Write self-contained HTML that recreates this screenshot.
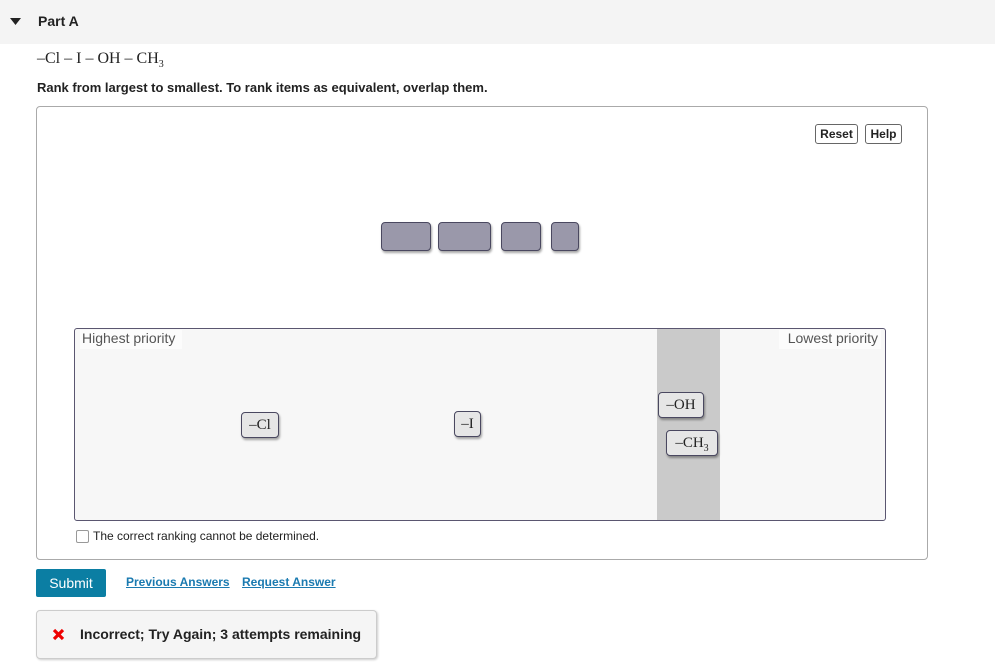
<!DOCTYPE html>
<html><head><style>
body{margin:0;width:995px;height:672px;background:#fff;font-family:"Liberation Sans",Arial,sans-serif;position:relative;overflow:hidden;color:#222}
.a{position:absolute}
.hdr{left:0;top:0;width:995px;height:44px;background:#f4f4f4}
.slot{position:absolute;top:222px;height:27px;background:#9a98aa;border:1px solid #4a4860;border-radius:4px;box-shadow:1px 2px 2px rgba(0,0,0,.35)}
.it{position:absolute;height:24px;background:#e6e6e6;border:1px solid #4a4860;border-radius:4px;box-shadow:1px 2px 2px rgba(0,0,0,.35);font-family:"Liberation Serif",serif;font-size:15px;line-height:24px;text-align:center;color:#222}
.btn{position:absolute;top:124px;height:18px;border:1px solid #666;border-radius:3px;font-size:12px;font-weight:bold;line-height:18px;text-align:center;background:#fff}
.lnk{position:absolute;top:575px;font-size:12px;font-weight:bold;color:#1a7ab0;text-decoration:underline}
</style></head><body>
<div class="a hdr"></div>
<svg class="a" style="left:10px;top:18px" width="11" height="7"><path d="M0 0H11L5.5 7Z" fill="#222"/></svg>
<div class="a" style="left:38px;top:13px;font-size:14px;font-weight:bold">Part A</div>
<div class="a" style="left:37px;top:50px;font-family:'Liberation Serif',serif;font-size:16px">–Cl – I – OH – CH<sub style="font-size:10px">3</sub></div>
<div class="a" style="left:37px;top:80px;font-size:13px;font-weight:bold">Rank from largest to smallest. To rank items as equivalent, overlap them.</div>
<div class="a" style="left:36px;top:106px;width:890px;height:452px;border:1px solid #aaa;border-radius:4px"></div>
<div class="btn" style="left:815px;width:41px">Reset</div>
<div class="btn" style="left:865px;width:35px">Help</div>
<div class="slot" style="left:381px;width:48px"></div>
<div class="slot" style="left:438px;width:51px"></div>
<div class="slot" style="left:501px;width:38px"></div>
<div class="slot" style="left:551px;width:26px"></div>
<div class="a" style="left:74px;top:328px;width:810px;height:191px;border:1px solid #5a5670;border-radius:3px;background:#f7f7f7"></div>
<div class="a" style="left:657px;top:329px;width:63px;height:191px;background:#cacaca"></div>
<div class="a" style="left:80px;top:330px;width:100px;height:19px;background:#fcfcfc;font-size:14px;color:#555;line-height:17px;padding-left:2px">Highest priority</div>
<div class="a" style="left:779px;top:330px;width:102px;height:19px;background:#fcfcfc;font-size:14px;color:#555;line-height:17px;text-align:right;padding-right:3px;box-sizing:border-box">Lowest priority</div>
<div class="it" style="left:241px;top:412px;width:36px">–Cl</div>
<div class="it" style="left:454px;top:411px;width:25px">–I</div>
<div class="it" style="left:658px;top:392px;width:44px">–OH</div>
<div class="it" style="left:666px;top:430px;width:50px">–CH<sub style="font-size:10px">3</sub></div>
<div class="a" style="left:76px;top:530px;width:11px;height:11px;border:1px solid #999;border-radius:2px;background:#fff"></div>
<div class="a" style="left:93px;top:529px;font-size:12px;color:#222">The correct ranking cannot be determined.</div>
<div class="a" style="left:36px;top:569px;width:70px;height:28px;background:#0b7ea3;border-radius:2px;color:#fff;font-size:14px;line-height:28px;text-align:center">Submit</div>
<div class="lnk" style="left:126px">Previous Answers</div>
<div class="lnk" style="left:242px">Request Answer</div>
<div class="a" style="left:36px;top:610px;width:339px;height:47px;background:#f5f5f5;border:1px solid #ccc;border-radius:4px;box-shadow:1px 1px 2px rgba(0,0,0,.2)"></div>
<svg class="a" style="left:52px;top:628px" width="13" height="13"><path d="M2 2L11 11M11 2L2 11" stroke="#e00" stroke-width="3.2"/></svg>
<div class="a" style="left:80px;top:626px;font-size:14px;font-weight:bold;color:#222">Incorrect; Try Again; 3 attempts remaining</div>
</body></html>
